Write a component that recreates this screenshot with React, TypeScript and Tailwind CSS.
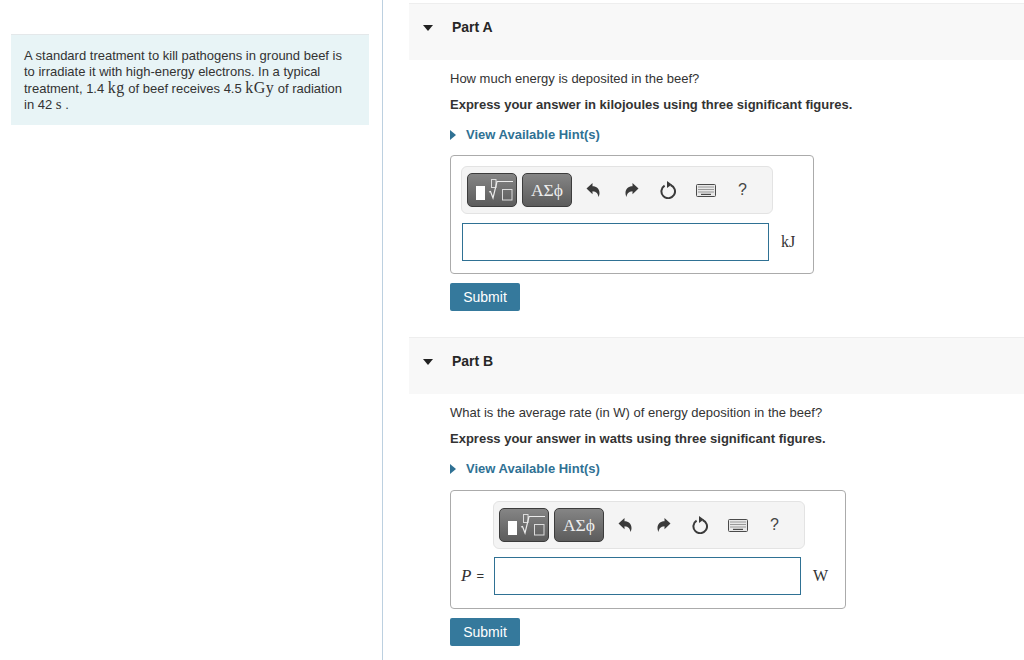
import React from 'react';

const Undo = () => (
  <svg width="14" height="16" viewBox="0 0 14 16" fill="#3a3a3a">
    <path d="M0.5 6.5 L6.5 1 V4.2 C10.5 4.2 13.5 6.8 13.5 11 C13.5 12.6 13 14 12.4 15 C12.3 12 10.5 9.4 6.5 9.2 V12.2 Z" />
  </svg>
);

const Redo = () => (
  <svg width="14" height="16" viewBox="0 0 14 16" fill="#3a3a3a">
    <path d="M13.5 6.5 L7.5 1 V4.2 C3.5 4.2 0.5 6.8 0.5 11 C0.5 12.6 1 14 1.6 15 C1.7 12 3.5 9.4 7.5 9.2 V12.2 Z" />
  </svg>
);

const Reset = () => (
  <svg width="16" height="18" viewBox="0 0 16 18" fill="none">
    <path d="M4.6 4.6 A6.8 6.8 0 1 0 10.6 4" stroke="#3a3a3a" strokeWidth="2" />
    <path d="M7 0 L11.8 3.6 L7 7 Z" fill="#3a3a3a" />
  </svg>
);

const Keyboard = () => (
  <svg width="20" height="13" viewBox="0 0 20 13" fill="none">
    <rect x="0.5" y="0.5" width="19" height="12" rx="1" fill="#e8e8e8" stroke="#4a4a4a" />
    <path d="M2.5 3 H17.5 M2.5 5.5 H17.5 M2.5 8 H17.5" stroke="#4a4a4a" strokeWidth="1.2" strokeDasharray="1 1" />
    <path d="M5 10.4 H15" stroke="#4a4a4a" strokeWidth="1.2" />
  </svg>
);

const TemplateIcon = () => (
  <svg width="50" height="34" viewBox="0 0 50 34" fill="none" className="-m-px shrink-0">
    <rect x="9" y="13" width="9" height="14" fill="#ffffff" />
    <rect x="24.5" y="6.5" width="4.5" height="8" stroke="#dcdcdc" strokeWidth="1" />
    <path d="M22 19 L23.5 18.5 L26 25 L30 8.5 H46" stroke="#ececec" strokeWidth="1.2" />
    <rect x="35.5" y="16.5" width="9.5" height="10.5" stroke="#dcdcdc" strokeWidth="1" />
  </svg>
);

const Toolbar = () => (
  <div className="flex h-[48px] w-[312px] items-center rounded-[6px] border border-[#e3e3e3] bg-[#f4f4f4] pl-[5px]">
    <div className="flex h-[34px] w-[50px] items-center justify-center rounded-[5px] border border-[#3c3c3c] bg-gradient-to-b from-[#858585] to-[#5c5c5c]">
      <TemplateIcon />
    </div>
    <div className="ml-[5px] flex h-[34px] w-[50px] items-center justify-center rounded-[5px] border border-[#3c3c3c] bg-gradient-to-b from-[#858585] to-[#5c5c5c] font-['Liberation_Serif',serif] text-[17.5px] text-[#eeeeee]">
      ΑΣϕ
    </div>
    <div className="ml-[14px] flex w-[14px] justify-center"><Undo /></div>
    <div className="ml-[25px] flex w-[14px] justify-center"><Redo /></div>
    <div className="ml-[21px] flex w-[16px] justify-center"><Reset /></div>
    <div className="ml-[20px] flex w-[20px] justify-center"><Keyboard /></div>
    <div className="ml-[22px] text-[16px] leading-none text-[#444444]">?</div>
  </div>
);

interface PartProps {
  title: string;
  question: string;
  instruction: string;
  label?: string;
  unit: string;
}

const Part: React.FC<PartProps> = ({ title, question, instruction, label, unit }) => {
  return (
    <div>
      <div className="flex h-[57px] items-center border-t border-[#eeeeee] bg-[#f8f8f8] pb-[9px]">
        <div className="ml-[14px] h-0 w-0 border-x-[5.5px] border-t-[6px] border-x-transparent border-t-[#222222]" />
        <div className="ml-[19px] text-[14px] font-bold text-[#262626]">{title}</div>
      </div>
      <div className="pl-[41px]">
        <p className="mt-[11px] text-[13px] leading-[16px] text-[#333333]">{question}</p>
        <p className="mt-[10px] text-[13px] leading-[16px] font-bold text-[#333333]">{instruction}</p>
        <div className="mt-[14px] flex h-[16px] items-center">
          <div className="h-0 w-0 border-y-[5.5px] border-l-[6px] border-y-transparent border-l-[#2f7194]" />
          <span className="ml-[10px] text-[13px] font-bold text-[#2f7194]">View Available Hint(s)</span>
        </div>
        <div className={`h-[119px] rounded-[4px] border border-[#ababab] pt-[10px] ${label ? 'mt-[13px] w-[396px]' : 'mt-[12px] w-[364px]'}`}>
          <div className={label ? 'ml-[42px]' : 'ml-[10px]'}>
            <Toolbar />
          </div>
          <div className={`flex items-center pl-[11px] ${label ? 'mt-[8px]' : 'mt-[9px]'}`}>
            {label && (
              <div className="flex w-[32px] shrink-0 items-center text-[13px] text-[#333333]">
                <i className="-ml-px font-['Liberation_Serif',serif] text-[17px]">{label}</i>
                <span className="ml-[5px]">=</span>
              </div>
            )}
            <div className="h-[38px] w-[307px] shrink-0 border border-[#2f7194] bg-white" />
            <div className="ml-[12px] font-['Liberation_Serif',serif] text-[16px] text-[#333333]">{unit}</div>
          </div>
        </div>
        <button className="mt-[9px] flex h-[28px] w-[70px] items-center justify-center rounded-[2px] bg-[#35799c] text-[14px] text-white">
          Submit
        </button>
      </div>
    </div>
  );
};

export default function App() {
  return (
    <div className="flex h-[660px] w-[1024px] overflow-hidden bg-white font-['Liberation_Sans',Arial,sans-serif]">
      <div className="h-full w-[383px] shrink-0 border-r border-[#bcd0e0] px-[11px] pt-[34px]">
        <div className="h-[91px] w-[358px] border-t border-[#e4e8ea] bg-[#e8f4f6] pt-[13px] pr-[20px] pl-[13px] text-[13px] leading-[16px] text-[#333333]">
          A standard treatment to kill pathogens in ground beef is to irradiate it with high-energy electrons. In a typical treatment, 1.4 <span className="font-['Liberation_Serif',serif] text-[16px] leading-none tracking-[0.4px]">kg</span> of beef receives 4.5 <span className="font-['Liberation_Serif',serif] text-[16px] leading-none tracking-[0.4px]">kGy</span> of radiation in 42 <span className="font-['Liberation_Serif',serif] text-[15px] leading-none">s</span> .
        </div>
      </div>
      <div className="flex-1 pt-[3px] pl-[26px]">
        <Part
          title="Part A"
          question="How much energy is deposited in the beef?"
          instruction="Express your answer in kilojoules using three significant figures."
          unit="kJ"
        />
        <div className="mt-[26px]">
          <Part
            title="Part B"
            question="What is the average rate (in W) of energy deposition in the beef?"
            instruction="Express your answer in watts using three significant figures."
            label="P"
            unit="W"
          />
        </div>
      </div>
    </div>
  );
}
